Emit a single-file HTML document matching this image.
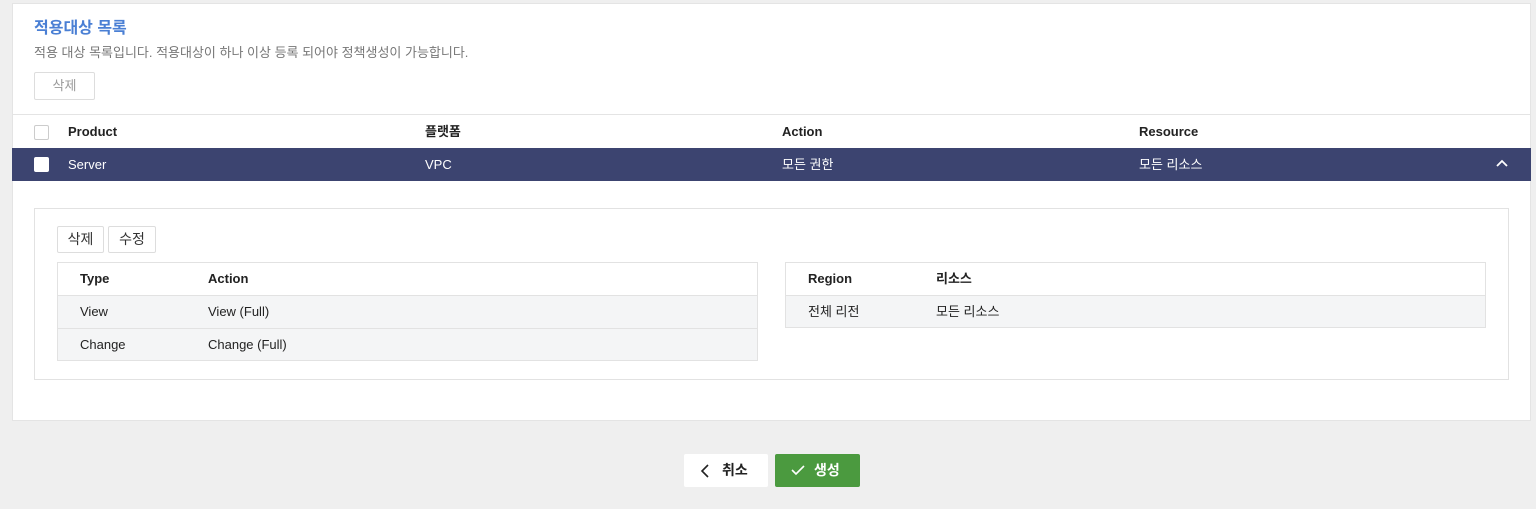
<!DOCTYPE html>
<html><head><meta charset="utf-8"><style>
*{box-sizing:border-box;margin:0;padding:0}
body{width:1536px;height:509px;background:#efefef;font-family:"Liberation Sans","Noto Sans CJK KR",sans-serif;font-size:13px;color:#222;position:relative;overflow:hidden}
.a{position:absolute}
.panel{left:12px;top:3px;width:1519px;height:418px;background:#fff;border:1px solid #e4e4e4}
.btn{position:absolute;background:#fff;border:1px solid #ddd;border-radius:2px;text-align:center;font-size:13px;color:#333}
.cb{position:absolute;width:15px;height:15px;border:1px solid #ccc;background:#fff;border-radius:2px}
.t{position:absolute;white-space:nowrap;line-height:16px}
</style></head><body>
<div class="a panel"></div>
<div class="t" style="left:34px;top:19px;font-size:16px;line-height:20px;font-weight:bold;color:#4a7fd4">적용대상 목록</div>
<div class="t" style="left:34px;top:45px;font-size:13px;color:#777">적용 대상 목록입니다. 적용대상이 하나 이상 등록 되어야 정책생성이 가능합니다.</div>
<div class="btn" style="left:34px;top:72px;width:61px;height:28px;line-height:26px;color:#999">삭제</div>
<div class="a" style="left:12px;top:114px;width:1519px;height:1px;background:#e4e4e4"></div>
<div class="cb" style="left:34px;top:125px"></div>
<div class="t" style="left:68px;top:124px;font-weight:bold">Product</div>
<div class="t" style="left:425px;top:124px;font-weight:bold">플랫폼</div>
<div class="t" style="left:782px;top:124px;font-weight:bold">Action</div>
<div class="t" style="left:1139px;top:124px;font-weight:bold">Resource</div>
<div class="a" style="left:12px;top:148px;width:1519px;height:33px;background:#3c4470"></div>
<div class="cb" style="left:34px;top:157px;border-color:#fff"></div>
<div class="t" style="left:68px;top:157px;color:#fff">Server</div>
<div class="t" style="left:425px;top:157px;color:#fff">VPC</div>
<div class="t" style="left:782px;top:157px;color:#fff">모든 권한</div>
<div class="t" style="left:1139px;top:157px;color:#fff">모든 리소스</div>
<svg class="a" style="left:1495px;top:158px" width="14" height="10"><path d="M2 8L7 3L12 8" stroke="#fff" stroke-width="1.8" fill="none"/></svg>
<div class="a" style="left:34px;top:208px;width:1475px;height:172px;border:1px solid #e2e2e2"></div>
<div class="btn" style="left:57px;top:226px;width:47px;height:27px;line-height:25px;font-size:14px">삭제</div>
<div class="btn" style="left:108px;top:226px;width:48px;height:27px;line-height:25px;font-size:14px">수정</div>
<div class="a" style="left:57px;top:262px;width:701px;height:99px;border:1px solid #e2e2e2">
 <div class="a" style="left:0;top:32px;width:699px;height:33px;background:#f4f5f6;border-top:1px solid #e2e2e2"></div>
 <div class="a" style="left:0;top:65px;width:699px;height:32px;background:#f4f5f6;border-top:1px solid #e2e2e2"></div>
</div>
<div class="t" style="left:80px;top:271px;font-weight:bold">Type</div>
<div class="t" style="left:208px;top:271px;font-weight:bold">Action</div>
<div class="t" style="left:80px;top:304px">View</div>
<div class="t" style="left:208px;top:304px">View (Full)</div>
<div class="t" style="left:80px;top:337px">Change</div>
<div class="t" style="left:208px;top:337px">Change (Full)</div>
<div class="a" style="left:785px;top:262px;width:701px;height:66px;border:1px solid #e2e2e2">
 <div class="a" style="left:0;top:32px;width:699px;height:32px;background:#f4f5f6;border-top:1px solid #e2e2e2"></div>
</div>
<div class="t" style="left:808px;top:271px;font-weight:bold">Region</div>
<div class="t" style="left:936px;top:271px;font-weight:bold">리소스</div>
<div class="t" style="left:808px;top:304px">전체 리전</div>
<div class="t" style="left:936px;top:304px">모든 리소스</div>
<div class="a" style="left:684px;top:454px;width:84px;height:33px;background:#fff;border-radius:2px"></div>
<svg class="a" style="left:700px;top:464px" width="10" height="14"><path d="M8 1L2 7L8 13" stroke="#222" stroke-width="1.6" fill="none"/></svg>
<div class="t" style="left:722px;top:462px;font-weight:bold;font-size:14px">취소</div>
<div class="a" style="left:775px;top:454px;width:85px;height:33px;background:#4b9a3f;border-radius:2px"></div>
<svg class="a" style="left:791px;top:464px" width="14" height="12"><path d="M1 6L5 10L13 2" stroke="#fff" stroke-width="1.6" fill="none"/></svg>
<div class="t" style="left:814px;top:462px;font-weight:bold;font-size:14px;color:#fff">생성</div>
</body></html>
